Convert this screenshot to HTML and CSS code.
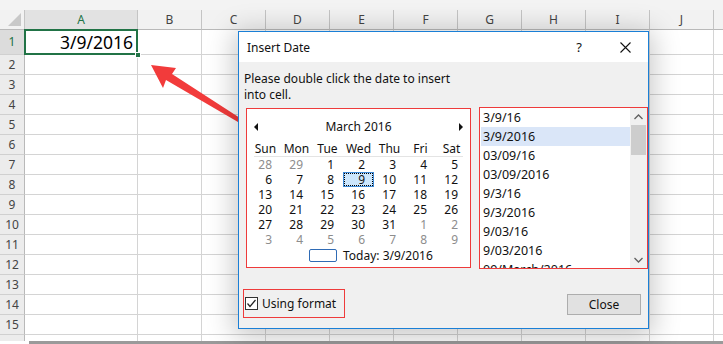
FILE: index.html
```html
<!DOCTYPE html>
<html lang="en">
<head>
  <meta charset="UTF-8">
  <title>Insert Date</title>
  <link rel="stylesheet" href="styles.css">
</head>
<body>

  <div class="sheet">
    <div class="topbar"></div>
    <div class="row head">
      <span class="rh corner"></span>
      <span class="ca picked">A</span><span>B</span><span>C</span><span>D</span><span>E</span><span>F</span><span>G</span><span>H</span><span>I</span><span>J</span><span class="rest"></span>
    </div>
    <div class="row first">
      <span class="rh picked">1</span>
      <span class="ca value">3/9/2016<i class="selection"></i><i class="handle"></i></span><span></span><span></span><span></span><span></span><span></span><span></span><span></span><span></span><span></span><span class="rest"></span>
    </div>
    <div class="row"><span class="rh">2</span><span class="ca"></span><span></span><span></span><span></span><span></span><span></span><span></span><span></span><span></span><span></span><span class="rest"></span></div>
    <div class="row"><span class="rh">3</span><span class="ca"></span><span></span><span></span><span></span><span></span><span></span><span></span><span></span><span></span><span></span><span class="rest"></span></div>
    <div class="row"><span class="rh">4</span><span class="ca"></span><span></span><span></span><span></span><span></span><span></span><span></span><span></span><span></span><span></span><span class="rest"></span></div>
    <div class="row"><span class="rh">5</span><span class="ca"></span><span></span><span></span><span></span><span></span><span></span><span></span><span></span><span></span><span></span><span class="rest"></span></div>
    <div class="row"><span class="rh">6</span><span class="ca"></span><span></span><span></span><span></span><span></span><span></span><span></span><span></span><span></span><span></span><span class="rest"></span></div>
    <div class="row"><span class="rh">7</span><span class="ca"></span><span></span><span></span><span></span><span></span><span></span><span></span><span></span><span></span><span></span><span class="rest"></span></div>
    <div class="row"><span class="rh">8</span><span class="ca"></span><span></span><span></span><span></span><span></span><span></span><span></span><span></span><span></span><span></span><span class="rest"></span></div>
    <div class="row"><span class="rh">9</span><span class="ca"></span><span></span><span></span><span></span><span></span><span></span><span></span><span></span><span></span><span></span><span class="rest"></span></div>
    <div class="row"><span class="rh">10</span><span class="ca"></span><span></span><span></span><span></span><span></span><span></span><span></span><span></span><span></span><span></span><span class="rest"></span></div>
    <div class="row"><span class="rh">11</span><span class="ca"></span><span></span><span></span><span></span><span></span><span></span><span></span><span></span><span></span><span></span><span class="rest"></span></div>
    <div class="row"><span class="rh">12</span><span class="ca"></span><span></span><span></span><span></span><span></span><span></span><span></span><span></span><span></span><span></span><span class="rest"></span></div>
    <div class="row"><span class="rh">13</span><span class="ca"></span><span></span><span></span><span></span><span></span><span></span><span></span><span></span><span></span><span></span><span class="rest"></span></div>
    <div class="row"><span class="rh">14</span><span class="ca"></span><span></span><span></span><span></span><span></span><span></span><span></span><span></span><span></span><span></span><span class="rest"></span></div>
    <div class="row"><span class="rh">15</span><span class="ca"></span><span></span><span></span><span></span><span></span><span></span><span></span><span></span><span></span><span></span><span class="rest"></span></div>
    <div class="row"><span class="rh"></span><span class="ca"></span><span></span><span></span><span></span><span></span><span></span><span></span><span></span><span></span><span></span><span class="rest"></span></div>
  </div>
  <div class="hscroll"></div>

  <!-- pointer from the dialog to the filled cell -->
  <svg class="pointer" width="723" height="344" viewBox="0 0 723 344">
    <polygon points="151,65 176,68 172,74 240,118 238,122 166,80 163,88" fill="#f23b3b"/>
  </svg>

  <div class="dialog">
    <div class="titlebar">
      <span class="title">Insert Date</span>
      <span class="tb-btn">?</span>
      <span class="tb-btn">
        <svg width="11" height="11" viewBox="0 0 11 11"><path d="M0.5 0.5L10.5 10.5M10.5 0.5L0.5 10.5" stroke="#111" stroke-width="1.1"/></svg>
      </span>
    </div>

    <div class="dialog-body">
      <p class="hint">Please double click the date to insert<br>into cell.</p>

      <div class="panels">
        <div class="calendar">
          <div class="cal-title">
            <svg width="5" height="8" viewBox="0 0 5 8"><path d="M4 0L0 4L4 8Z" fill="#111"/></svg>
            <span>March 2016</span>
            <svg width="5" height="8" viewBox="0 0 5 8"><path d="M1 0L5 4L1 8Z" fill="#111"/></svg>
          </div>
          <div class="weekdays">
            <span>Sun</span><span>Mon</span><span>Tue</span><span>Wed</span><span>Thu</span><span>Fri</span><span>Sat</span>
          </div>
          <div class="rule"></div>
          <div class="days">
            <span class="other">28</span><span class="other">29</span><span>1</span><span>2</span><span>3</span><span>4</span><span>5</span>
            <span>6</span><span>7</span><span>8</span><span class="chosen">9</span><span>10</span><span>11</span><span>12</span>
            <span>13</span><span>14</span><span>15</span><span>16</span><span>17</span><span>18</span><span>19</span>
            <span>20</span><span>21</span><span>22</span><span>23</span><span>24</span><span>25</span><span>26</span>
            <span>27</span><span>28</span><span>29</span><span>30</span><span>31</span><span class="other">1</span><span class="other">2</span>
            <span class="other">3</span><span class="other">4</span><span class="other">5</span><span class="other">6</span><span class="other">7</span><span class="other">8</span><span class="other">9</span>
          </div>
          <div class="today">
            <span class="today-box"></span>
            <span>Today: 3/9/2016</span>
          </div>
        </div>

        <div class="formats">
          <ul class="format-list">
            <li>3/9/16</li>
            <li class="active">3/9/2016</li>
            <li>03/09/16</li>
            <li>03/09/2016</li>
            <li>9/3/16</li>
            <li>9/3/2016</li>
            <li>9/03/16</li>
            <li>9/03/2016</li>
            <li>09/March/2016</li>
          </ul>
          <div class="scrollbar">
            <span class="arrow">
              <svg width="9" height="6" viewBox="0 0 9 6"><path d="M0.5 5L4.5 1L8.5 5" fill="none" stroke="#606060" stroke-width="1.3"/></svg>
            </span>
            <span class="thumb"></span>
            <span class="track"></span>
            <span class="arrow">
              <svg width="9" height="6" viewBox="0 0 9 6"><path d="M0.5 1L4.5 5L8.5 1" fill="none" stroke="#606060" stroke-width="1.3"/></svg>
            </span>
          </div>
        </div>
      </div>

      <div class="footer">
        <label class="use-format">
          <span class="checkbox">
            <svg width="11" height="11" viewBox="0 0 11 11"><path d="M1.5 5.5L4 8.5L9.5 2" fill="none" stroke="#222" stroke-width="1.2"/></svg>
          </span>
          Using format
        </label>
        <button class="close-btn">Close</button>
      </div>
    </div>
  </div>

</body>
</html>
```

FILE: styles.css
```css
* {
  box-sizing: border-box;
}

body {
  margin: 0;
  width: 723px;
  height: 344px;
  overflow: hidden;
  position: relative;
  background-color: #fff;
  font-family: "Noto Sans", "DejaVu Sans", sans-serif;
  color: #111;
}

/* spreadsheet */

.sheet {
  height: 341px;
  overflow: hidden;
}

.topbar {
  height: 10px;
  background-color: #f3f3f3;
}

.row {
  display: flex;
  height: 20px;
}

.row > span {
  flex: 0 0 64px;
  border-right: 1px solid #d4d4d4;
  border-bottom: 1px solid #d4d4d4;
}

.row > .rh {
  flex-basis: 25px;
  background-color: #ececec;
  border-right-color: #b9b9b9;
  border-bottom-color: #d0d0d0;
  color: #444;
  font-size: 12px;
  line-height: 19px;
  text-align: center;
}

.row > .ca {
  flex-basis: 113px;
}

.row > .rest {
  flex: 1;
  border-right: none;
}

.row.head {
  height: 20px;
  background-color: #f2f2f2;
}

.row.head > span {
  border-right-color: #c4c4c4;
  border-bottom-color: #b9b9b9;
  color: #444;
  font-size: 12px;
  line-height: 19px;
  text-align: center;
}

.row.head > .corner {
  position: relative;
  background-color: #f2f2f2;
}

.row.head > .corner::after {
  content: "";
  position: absolute;
  right: 3px;
  bottom: 3px;
  border-left: 13px solid transparent;
  border-bottom: 13px solid #c8c8c8;
}

.row.head > .picked {
  background-color: #e2e2e2;
  color: #217346;
}

.row > .rh.picked {
  background-color: #dcdcdc;
  color: #217346;
}

.row.first {
  height: 25px;
}

.row.first > .rh {
  line-height: 24px;
}

.value {
  position: relative;
  text-align: right;
  padding-right: 4px;
  font-size: 17.5px;
  line-height: 24px;
  color: #000;
}

.selection {
  position: absolute;
  left: -1px;
  top: -1px;
  right: -1px;
  bottom: -1px;
  border: 2px solid #217346;
}

.handle {
  position: absolute;
  right: -4px;
  bottom: -4px;
  width: 6px;
  height: 6px;
  background-color: #217346;
  border: 1px solid #fff;
}

.hscroll {
  height: 3px;
  margin-left: 29px;
  background-color: #9a9a9a;
}

.pointer {
  position: absolute;
  left: 0;
  top: 0;
  pointer-events: none;
}

/* dialog */

.dialog {
  position: absolute;
  left: 238px;
  top: 31px;
  width: 411px;
  height: 298px;
  border: 1px solid #1a7fd6;
  background-color: #f0f0f0;
  box-shadow: 0 4px 26px 4px rgba(0, 0, 0, 0.22);
  font-size: 12px;
}

.titlebar {
  display: flex;
  align-items: center;
  height: 30px;
  background-color: #fff;
}

.title {
  flex: 1;
  padding-left: 8px;
  padding-top: 1px;
}

.tb-btn {
  display: flex;
  justify-content: center;
  align-items: center;
  width: 46px;
  height: 30px;
  font-size: 13px;
}

.dialog-body {
  padding: 9px 0 0 5px;
}

.hint {
  margin: 0;
  line-height: 16px;
}

.panels {
  display: flex;
  gap: 8px;
  margin-top: 4px;
}

.calendar {
  width: 225px;
  height: 160px;
  margin: 1px 0 0 2px;
  padding: 9px 3px 0 3px;
  border: 1px solid #ee3b3b;
  background-color: #fff;
}

.cal-title {
  display: flex;
  justify-content: space-between;
  align-items: center;
  height: 17px;
  padding: 0 4px 0 4px;
}

.weekdays,
.days {
  display: grid;
  grid-template-columns: repeat(7, 31px);
}

.weekdays {
  margin-top: 6px;
  height: 15px;
  line-height: 15px;
  text-align: center;
}

.rule {
  height: 1px;
  margin: 0 4px;
  background-color: #e4e4e4;
}

.days span {
  height: 15px;
  line-height: 15px;
  text-align: right;
  padding-right: 9px;
}

.days .other {
  color: #8d8d8d;
}

.days .chosen {
  padding-right: 8px;
  background-color: #cce6fc;
  border: 1px solid #3f8bd8;
  outline: 1px dotted #000;
  outline-offset: -2px;
  line-height: 13px;
}

.today {
  display: flex;
  align-items: center;
  gap: 6px;
  margin: 2px 0 0 59px;
  height: 13px;
}

.today-box {
  width: 28px;
  height: 13px;
  border: 1px solid #2f6bb5;
  border-radius: 2px;
}

.formats {
  display: flex;
  width: 169px;
  height: 162px;
  border: 1px solid #ee3b3b;
  background-color: #fff;
}

.format-list {
  flex: 1;
  margin: 0;
  padding: 0 0 0 1px;
  list-style: none;
  overflow: hidden;
}

.format-list li {
  height: 19px;
  line-height: 19px;
  padding-left: 2px;
  font-size: 12.5px;
}

.format-list li.active {
  background-color: #dae6f8;
}

.scrollbar {
  display: flex;
  flex-direction: column;
  width: 17px;
  background-color: #f0f0f0;
}

.arrow {
  display: flex;
  justify-content: center;
  align-items: center;
  height: 17px;
}

.thumb {
  height: 30px;
  margin: 0 1px;
  background-color: #cdcdcd;
}

.track {
  flex: 1;
}

.footer {
  display: flex;
  justify-content: space-between;
  align-items: flex-start;
}

.use-format {
  display: flex;
  align-items: center;
  gap: 4px;
  width: 102px;
  height: 29px;
  margin: 20px 0 0 -1px;
  padding-left: 1px;
  border: 1px solid #ee3b3b;
}

.checkbox {
  display: flex;
  justify-content: center;
  align-items: center;
  width: 13px;
  height: 13px;
  border: 1px solid #333;
  background-color: #fff;
}

.close-btn {
  width: 74px;
  height: 21px;
  margin: 25px 7px 0 0;
  padding: 0;
  border: 1px solid #adadad;
  background-color: #e1e1e1;
  font-family: inherit;
  font-size: 12px;
  color: #111;
}
```
